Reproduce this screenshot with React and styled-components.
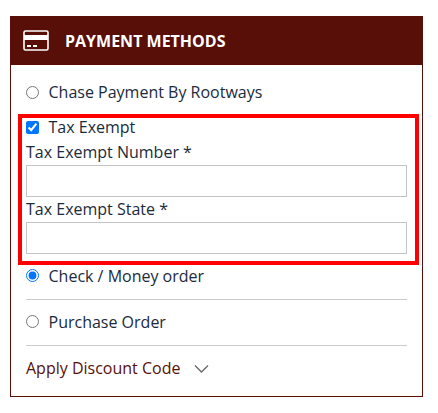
import React from 'react';
import styled, { createGlobalStyle } from 'styled-components';

const GlobalStyle = createGlobalStyle`
  html, body {
    margin: 0;
    padding: 0;
    background: #fff;
    font-family: "Open Sans", "Liberation Sans", sans-serif;
    font-size: 16px;
    color: #212529;
  }
  * { box-sizing: border-box; }
`;

const Page = styled.div`
  padding: 16px 15px 16px 10px;
`;

const Panel = styled.div`
  border: 1px solid #570f08;
  height: 381px;
`;

const Header = styled.div`
  background: #570f08;
  height: 49px;
  margin: -1px -1px 0;
  display: flex;
  align-items: center;
  padding-left: 13px;
  column-gap: 16px;
  color: #fff;
  font-weight: 700;
  font-size: 16px;
`;

const Body = styled.div`
  padding: 0 15px;
`;

const Row = styled.label`
  display: flex;
  align-items: center;
  column-gap: 9.5px;
  height: ${props => props.$height || 46}px;
  border-bottom: ${props => props.$divider ? '1px solid #ccc' : 'none'};
  padding-top: ${props => props.$top || 0}px;
  padding-bottom: ${props => props.$bottom || 0}px;
  color: #1a2b3c;

  input {
    margin: 0;
    width: 13px;
    height: 13px;
    flex: none;
  }
`;

const Highlight = styled.div`
  border: 4px solid #f00;
  margin: 0 -12px 0 -8px;
  padding: 0 8px 0 4px;
  height: 151px;
`;

const FieldLabel = styled.div`
  height: ${props => props.$height}px;
  display: flex;
  align-items: flex-end;
  padding-bottom: 2px;
  color: #1a2b3c;
`;

const TextInput = styled.input`
  display: block;
  width: 100%;
  height: 32px;
  border: 1px solid #c4c4c4;
  background: #fff;
`;

const Discount = styled.div`
  display: flex;
  align-items: center;
  column-gap: 14px;
  height: 44px;
  color: #570f08;
`;

const Chevron = () => (
  <svg width="15" height="9" viewBox="0 0 15 9" fill="none" stroke="#666" strokeWidth="1.3">
    <path d="M1 1.5 L7.5 8 L14 1.5" />
  </svg>
);

const CardIcon = () => (
  <svg width="26" height="21" viewBox="0 0 26 21" fill="none">
    <rect x="1" y="1" width="24" height="19" rx="1.5" stroke="#fff" strokeWidth="1.6" />
    <rect x="1" y="5" width="24" height="5" fill="#fff" />
    <path d="M4 16 H8 M10 16 H14" stroke="#fff" strokeWidth="2" />
  </svg>
);

const App = () => {
  return (
    <Page>
      <GlobalStyle />
      <Panel>
        <Header>
          <CardIcon />
          <span>PAYMENT METHODS</span>
        </Header>
        <Body>
          <Row $height={49} $top={5}>
            <input type="radio" name="pay" />
            Chase Payment By Rootways
          </Row>
          <Highlight>
            <Row $height={18}>
              <input type="checkbox" defaultChecked />
              Tax Exempt
            </Row>
            <FieldLabel $height={29}>Tax Exempt Number *</FieldLabel>
            <TextInput />
            <FieldLabel $height={25}>Tax Exempt State *</FieldLabel>
            <TextInput />
          </Highlight>
          <Row $height={35} $bottom={13} $divider>
            <input type="radio" name="pay" defaultChecked />
            Check / Money order
          </Row>
          <Row $bottom={2} $divider>
            <input type="radio" name="pay" />
            Purchase Order
          </Row>
          <Discount>
            Apply Discount Code
            <Chevron />
          </Discount>
        </Body>
      </Panel>
    </Page>
  );
};

export default App;
